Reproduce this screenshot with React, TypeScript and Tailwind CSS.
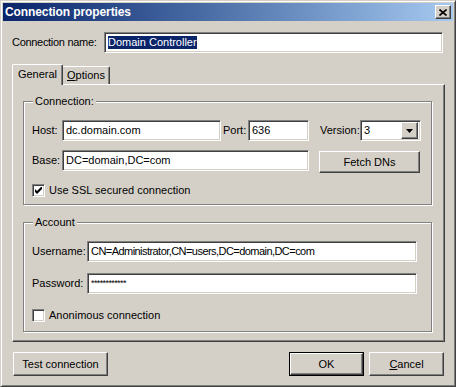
import React from "react";

const sunken =
  "bg-white border border-t-[#808080] border-l-[#808080] border-b-white border-r-white shadow-[inset_1px_1px_0_#404040,inset_-1px_-1px_0_#d4d0c8]";
const raised =
  "bg-[#d4d0c8] border border-t-white border-l-white border-b-[#404040] border-r-[#404040] shadow-[inset_-1px_-1px_0_#808080]";
const group =
  "border border-[#808080] shadow-[inset_1px_1px_0_#fff,1px_1px_0_#fff] w-[409px]";

function TextBox({ children, className = "" }: { children: React.ReactNode; className?: string }) {
  return (
    <div className={`${sunken} h-[21px] flex items-center px-[3px] whitespace-nowrap overflow-hidden ${className}`}>
      {children}
    </div>
  );
}

function Button({ children, className = "" }: { children: React.ReactNode; className?: string }) {
  return (
    <div className={`${raised} flex items-center justify-center ${className}`}>{children}</div>
  );
}

function CheckBox({ checked, label }: { checked?: boolean; label: string }) {
  return (
    <div className="flex items-center h-[13px]">
      <div className={`${sunken} w-[13px] h-[13px] flex items-center justify-center`}>
        {checked && (
          <svg width="7" height="7" viewBox="0 0 7 7">
            <path d="M0 2 L2 4 L6 0 L7 0 L7 2 L2 7 L0 5 Z" fill="#000" />
          </svg>
        )}
      </div>
      <span className="ml-[4px]">{label}</span>
    </div>
  );
}

export default function App() {
  return (
    <div className="w-[456px] h-[387px] bg-[#d4d0c8] border border-t-[#d4d0c8] border-l-[#d4d0c8] border-b-[#404040] border-r-[#404040] shadow-[inset_1px_1px_0_#fff,inset_-1px_-1px_0_#808080] p-[2px] flex flex-col text-[11px] leading-[13px] text-black font-['Liberation_Sans',Arial,sans-serif]">
      {/* title bar */}
      <div className="h-[18px] flex items-center justify-between bg-linear-to-r from-[#0a246a] to-[#a6caf0] pl-[2px] pr-[2px]">
        <span className="text-white font-bold text-[12px] tracking-[-0.1px]">Connection properties</span>
        <div className={`${raised} w-[16px] h-[14px] flex items-center justify-center`}>
          <svg width="8" height="7" viewBox="0 0 8 7">
            <path d="M0.5 0.5 L7.5 6.5 M7.5 0.5 L0.5 6.5" stroke="#000" strokeWidth="1.6" />
          </svg>
        </div>
      </div>

      <div className="flex flex-col pl-[9px] pr-[8px]">
        {/* connection name */}
        <div className="mt-[11px] h-[21px] flex items-center">
          <span className="w-[92px] tracking-[-0.3px]">Connection name:</span>
          <TextBox className="flex-1 mr-[2px]">
            <span className="bg-[#0a246a] text-white">Domain Controller</span>
          </TextBox>
        </div>

        {/* tabs */}
        <div className="mt-[11px] flex items-end">
          <div className="relative z-10 -mb-px h-[21px] w-[51px] bg-[#d4d0c8] border-t border-l border-t-white border-l-white border-r border-r-[#404040] shadow-[inset_-1px_0_0_#808080] rounded-t-[2px] flex items-center justify-center pb-[2px]">
            General
          </div>
          <div className="h-[18px] w-[47px] border-t border-t-white border-r border-r-[#404040] shadow-[inset_-1px_0_0_#808080] rounded-tr-[2px] flex items-center justify-center">
            <span>
              <u className="underline-offset-1">O</u>ptions
            </span>
          </div>
        </div>

        {/* panel */}
        <div className="h-[258px] border border-t-white border-l-white border-b-[#404040] border-r-[#404040] shadow-[inset_-1px_-1px_0_#808080] pl-[10px] flex flex-col">
          <fieldset className={`${group} mt-[10px]`}>
            <legend className="ml-[9px] px-[2px] bg-[#d4d0c8] leading-[13px]">Connection:</legend>
            <div className="pl-[8px] pb-[7px]">
              <div className="mt-[12px] flex items-center h-[21px]">
                <span className="w-[30px]">Host:</span>
                <TextBox className="w-[159px]">dc.domain.com</TextBox>
                <span className="w-[27px] pl-[2px]">Port:</span>
                <TextBox className="w-[61px]">636</TextBox>
                <span className="w-[51px] pl-[11px]">Version:</span>
                <div className={`${sunken} w-[61px] h-[21px] flex items-center pl-[3px] pr-[2px]`}>
                  <span className="flex-1">3</span>
                  <div className={`${raised} w-[17px] h-[17px] flex items-center justify-center`}>
                    <svg width="7" height="4" viewBox="0 0 7 4">
                      <path d="M0 0 H7 L3.5 4 Z" fill="#000" />
                    </svg>
                  </div>
                </div>
              </div>
              <div className="mt-[9px] flex items-start h-[22px]">
                <span className="w-[30px] h-[21px] flex items-center">Base:</span>
                <TextBox className="w-[247px]">DC=domain,DC=com</TextBox>
                <Button className="ml-[10px] mt-[1px] w-[101px] h-[22px]">Fetch DNs</Button>
              </div>
              <div className="mt-[12px]">
                <CheckBox checked label="Use SSL secured connection" />
              </div>
            </div>
          </fieldset>

          <fieldset className={`${group} mt-[11px]`}>
            <legend className="ml-[9px] px-[2px] bg-[#d4d0c8] leading-[13px]">Account</legend>
            <div className="pl-[8px] pb-[9px]">
              <div className="mt-[12px] flex items-center h-[21px]">
                <span className="w-[55px]">Username:</span>
                <TextBox className="w-[330px]">
                  <span className="tracking-[-0.55px]">CN=Administrator,CN=users,DC=domain,DC=com</span>
                </TextBox>
              </div>
              <div className="mt-[11px] flex items-center h-[21px]">
                <span className="w-[55px]">Password:</span>
                <TextBox className="w-[330px] text-[9px] tracking-[-0.6px]">************</TextBox>
              </div>
              <div className="mt-[15px]">
                <CheckBox label="Anonimous connection" />
              </div>
            </div>
          </fieldset>
        </div>

        {/* buttons */}
        <div className="mt-[10px] flex h-[24px]">
          <Button className="w-[95px] h-[24px] ml-[1px]">Test connection</Button>
          <div className="ml-auto border border-black w-[75px] h-[24px]">
            <Button className="w-full h-full">OK</Button>
          </div>
          <Button className="ml-[5px] mr-[1px] w-[75px] h-[24px]">
            <span>
              <u className="underline-offset-1">C</u>ancel
            </span>
          </Button>
        </div>
      </div>
    </div>
  );
}
